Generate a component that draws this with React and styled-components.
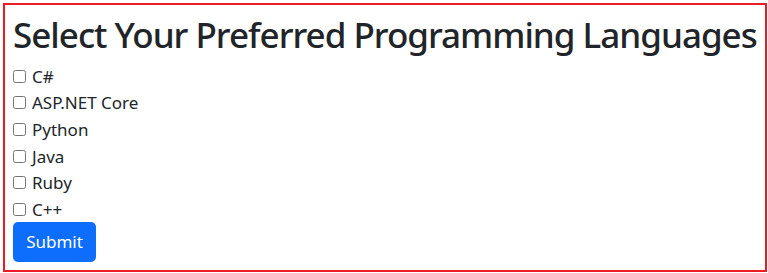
import React from 'react';
import styled, { createGlobalStyle } from 'styled-components';

const GlobalStyle = createGlobalStyle`
  body {
    margin: 0;
    background: #fff;
    font-family: "Noto Sans", "Open Sans", sans-serif;
    color: #212529;
  }
`;

const Page = styled.div`
  padding: 3px 1px 1px 3px;
`;

const Panel = styled.form`
  border: 2px solid #ec1c24;
  height: 269px;
  box-sizing: border-box;
  padding: 6px 8px 0 8px;
`;

const Title = styled.h1`
  margin: 0 0 4px 0;
  font-size: 35px;
  font-weight: 500;
  letter-spacing: -1px;
  line-height: 48px;
  white-space: nowrap;
`;

const Option = styled.label`
  display: flex;
  align-items: center;
  height: 26.6px;
  font-size: 17px;
`;

const Box = styled.input`
  margin: 0 6px 0 0;
  width: 13px;
  height: 13px;
`;

const SubmitButton = styled.button`
  margin-top: -1px;
  width: 83px;
  height: 40px;
  border: none;
  border-radius: 5px;
  background: #0d6efd;
  color: #fff;
  font-family: inherit;
  font-size: 17px;
`;

const languages = ['C#', 'ASP.NET Core', 'Python', 'Java', 'Ruby', 'C++'];

const App = () => {
  return (
    <>
      <GlobalStyle />
      <Page>
        <Panel onSubmit={(e) => e.preventDefault()}>
          <Title>Select Your Preferred Programming Languages</Title>
          {languages.map((lang) => (
            <Option key={lang}>
              <Box type="checkbox" />
              {lang}
            </Option>
          ))}
          <SubmitButton type="submit">Submit</SubmitButton>
        </Panel>
      </Page>
    </>
  );
};

export default App;
